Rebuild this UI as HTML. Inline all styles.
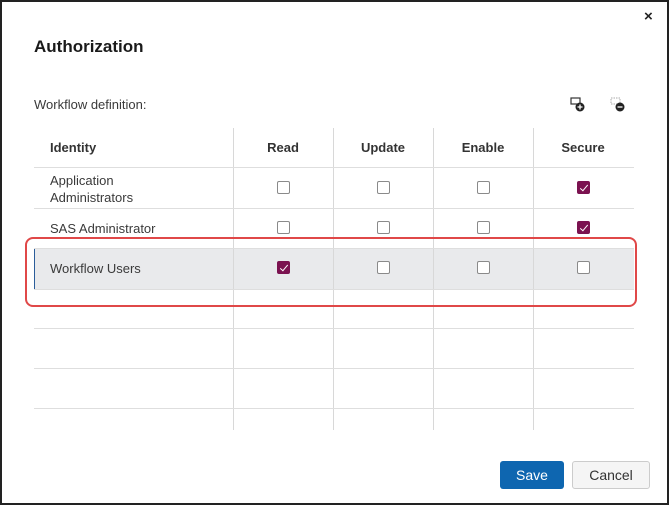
<!DOCTYPE html>
<html><head><style>
*{margin:0;padding:0;box-sizing:border-box}
body{width:669px;height:505px;background:#fff;font-family:"Liberation Sans",sans-serif;color:#222;position:relative;overflow:hidden}
.frame{position:absolute;left:0;top:0;width:669px;height:505px;border:2px solid #222;pointer-events:none}
.abs{position:absolute}
.t{font-size:13px;color:#3a3a3a}
.h{position:absolute;top:140px;font-size:13px;font-weight:bold;color:#333}
.cb{position:absolute;width:13px;height:13px;border:1px solid #8a8a8a;border-radius:2px;background:#fff}
.ck{background:#7b1250;border-color:#7b1250}
.ck::after{content:"";position:absolute;left:4px;top:1px;width:3px;height:7px;border:solid #fff;border-width:0 1.5px 1.5px 0;transform:rotate(40deg)}
.vl{position:absolute;top:128px;height:302px;width:1px;background:#d8d8d8}
.hl{position:absolute;left:34px;width:600px;height:1px;background:#dedede}
</style></head><body>
<div class="abs" style="left:644px;top:8px;font-size:15px;font-weight:bold">×</div>
<div class="abs" style="left:34px;top:37px;font-size:17px;font-weight:bold;color:#1a1a1a">Authorization</div>
<div class="abs t" style="left:34px;top:97px">Workflow definition:</div>
<svg class="abs" style="left:570px;top:97px" width="16" height="16"><rect x="1" y="1" width="9" height="6" fill="none" stroke="#333" stroke-width="1.2"/><circle cx="10" cy="10" r="4.5" fill="#222"/><path d="M10 7.5v5M7.5 10h5" stroke="#fff" stroke-width="1.3"/></svg>
<svg class="abs" style="left:610px;top:97px" width="16" height="16"><rect x="1" y="1" width="9" height="6" fill="none" stroke="#aaa" stroke-width="1" stroke-dasharray="1.5 1"/><circle cx="10" cy="10" r="4.5" fill="#222"/><path d="M7.5 10h5" stroke="#fff" stroke-width="1.3"/></svg>

<div class="abs" style="left:34px;top:248px;width:600px;height:41px;background:#e9eaec;border-left:1px solid #2b5d9a"></div>
<div class="vl" style="left:233px"></div><div class="vl" style="left:333px"></div><div class="vl" style="left:433px"></div><div class="vl" style="left:533px"></div>
<div class="hl" style="top:167px"></div><div class="hl" style="top:208px"></div><div class="hl" style="top:248px"></div><div class="hl" style="top:289px"></div><div class="hl" style="top:328px"></div><div class="hl" style="top:368px"></div><div class="hl" style="top:408px"></div>

<div class="h" style="left:50px">Identity</div>
<div class="h" style="left:233px;width:100px;text-align:center">Read</div>
<div class="h" style="left:333px;width:100px;text-align:center">Update</div>
<div class="h" style="left:433px;width:100px;text-align:center">Enable</div>
<div class="h" style="left:533px;width:100px;text-align:center">Secure</div>

<div class="abs t" style="left:50px;top:172px;line-height:17px">Application<br>Administrators</div>
<div class="abs t" style="left:50px;top:221px">SAS Administrator</div>
<div class="abs t" style="left:50px;top:261px">Workflow Users</div>

<div class="cb" style="left:277px;top:181px"></div><div class="cb" style="left:377px;top:181px"></div><div class="cb" style="left:477px;top:181px"></div><div class="cb ck" style="left:577px;top:181px"></div>
<div class="cb" style="left:277px;top:221px"></div><div class="cb" style="left:377px;top:221px"></div><div class="cb" style="left:477px;top:221px"></div><div class="cb ck" style="left:577px;top:221px"></div>
<div class="cb ck" style="left:277px;top:261px"></div><div class="cb" style="left:377px;top:261px"></div><div class="cb" style="left:477px;top:261px"></div><div class="cb" style="left:577px;top:261px"></div>

<div class="abs" style="left:25px;top:237px;width:612px;height:70px;border:2px solid #e04848;border-radius:8px"></div>

<div class="abs" style="left:500px;top:461px;width:64px;height:28px;background:#0e66b0;border-radius:3px;color:#fff;font-size:14px;text-align:center;line-height:28px">Save</div>
<div class="abs" style="left:572px;top:461px;width:78px;height:28px;background:#f5f5f5;border:1px solid #ccc;border-radius:3px;color:#333;font-size:14px;text-align:center;line-height:26px">Cancel</div>
<div class="frame"></div>
</body></html>
